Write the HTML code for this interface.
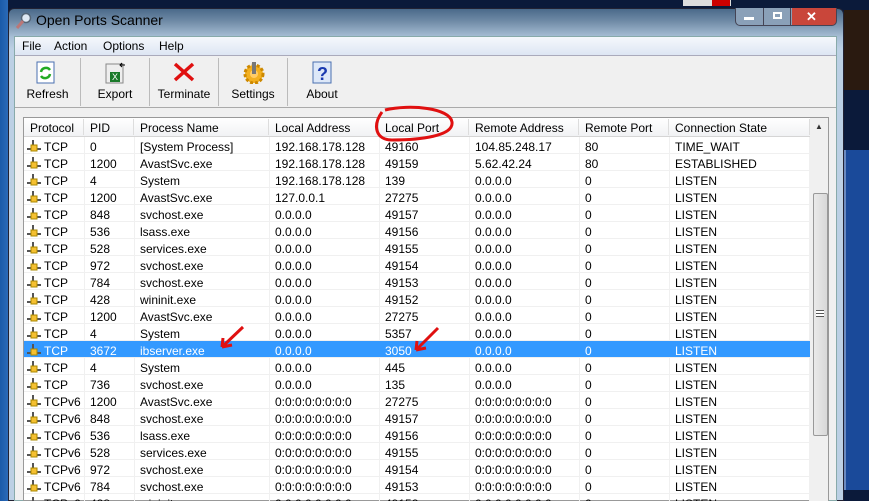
<!DOCTYPE html>
<html style="width:869px;height:501px;overflow:hidden"><head><meta charset="utf-8"><style>
*{margin:0;padding:0;box-sizing:border-box}
body{width:869px;height:501px;overflow:hidden;background:#0a2a6a;font-family:"Liberation Sans",sans-serif;font-size:12px;position:relative}
.abs{position:absolute}
#desk{left:0;top:0;width:869px;height:501px;background:linear-gradient(90deg,#1a5aa8 0,#2a6ab8 8px,#0b1a3a 8px)}
#frame{left:8px;top:8px;width:836px;height:493px;background:linear-gradient(180deg,#4a6a8a 0,#6f8aa6 12px,#a8bfd6 28px,#bcd0e4 40px);border:1px solid #223;border-radius:6px 6px 0 0}
#title{left:36px;top:12px;font-size:14px;color:#000}
#client{left:14px;top:36px;width:823px;height:465px;background:#f0f0f0;border:1px solid #8aa}
#menu{left:15px;top:37px;width:821px;height:18px;background:linear-gradient(#f5f8fc,#dde6f3)}
#menu span{position:absolute;top:2px;font-size:12px}
.tb{position:absolute;top:58px;height:48px;border-right:1px solid #bbb;text-align:center}
.tb .lbl{position:absolute;bottom:5px;left:0;right:0;font-size:12px}
#lv{left:23px;top:117px;width:806px;height:384px;background:#fff;border:1px solid #999}
#hdr{left:24px;top:118px;width:786px;height:19px;background:linear-gradient(#fff,#f1f2f4);border-bottom:1px solid #d5d5d5}
.h{position:absolute;top:3px;font-size:12px}
.hs{position:absolute;top:1px;width:1px;height:16px;background:#ddd}
#rows{position:absolute;left:0;top:0;width:869px;height:501px;overflow:hidden}
.row{position:absolute;left:24px;width:786px;height:17px;border-bottom:1px solid #f0f0f0}
.row span{position:absolute;top:3px;font-size:12px;white-space:nowrap}
.row.sel{background:#3399ff;color:#fff}
.vl{position:absolute;top:137px;width:1px;height:364px;background:#f0f0f0}
</style></head><body>
<div id="desk" class="abs"></div>
<div class="abs" style="left:683px;top:0;width:48px;height:6px;background:#ddd"></div>
<div class="abs" style="left:712px;top:0;width:18px;height:6px;background:#c00"></div>
<div class="abs" style="left:844px;top:10px;width:25px;height:80px;background:#2a1a10"></div>
<div class="abs" style="left:844px;top:150px;width:25px;height:340px;background:#1a4a9a;border-left:2px solid #6a8ac0"></div>
<div id="frame" class="abs"></div>
<svg class="abs" style="left:15px;top:12px" width="18" height="18"><circle cx="11" cy="6" r="4.5" fill="#dfe9f4" stroke="#567" stroke-width="1.5"/><line x1="8" y1="9" x2="2" y2="16" stroke="#b77" stroke-width="3"/></svg>
<div id="title" class="abs">Open Ports Scanner</div>
<div class="abs" style="left:735px;top:8px;width:102px;height:18px;border:1px solid #445;border-top:none;border-radius:0 0 5px 5px;background:linear-gradient(90deg,#8aa0b8 0,#8aa0b8 56%,#c9463a 56%)"></div>
<div class="abs" style="left:763px;top:8px;width:1px;height:17px;background:#445"></div>
<div class="abs" style="left:790px;top:8px;width:1px;height:17px;background:#445"></div>
<div class="abs" style="left:744px;top:17px;width:10px;height:3px;background:#fff"></div>
<div class="abs" style="left:773px;top:12px;width:9px;height:7px;border:2px solid #fff"></div>
<div class="abs" style="left:806px;top:9px;color:#fff;font-weight:bold;font-size:13px">✕</div>
<div id="client" class="abs"></div>
<div id="menu" class="abs"><span style="left:7px">File</span><span style="left:39px">Action</span><span style="left:88px">Options</span><span style="left:144px">Help</span></div>
<div class="abs" style="left:15px;top:55px;width:821px;height:1px;background:#aab"></div>
<div class="tb" style="left:15px;width:66px"><svg class="abs" style="left:21px;top:3px" width="20" height="24"><rect x="1" y="1" width="17" height="21" fill="#fff" stroke="#4a6fb0"/><path d="M5 11a5 5 0 0 1 9-2M14 13a5 5 0 0 1-9 2" stroke="#2a2" stroke-width="2.5" fill="none"/></svg><div class="lbl">Refresh</div></div>
<div class="tb" style="left:81px;width:69px"><svg class="abs" style="left:22px;top:3px" width="24" height="24"><rect x="3" y="3" width="17" height="19" fill="#eee" stroke="#888"/><rect x="7" y="11" width="10" height="10" fill="#1a7a2a"/><text x="9" y="19" font-size="9" fill="#fff" font-family="Liberation Sans">X</text><path d="M22 4h-5M19 2l-2 2 2 2" stroke="#000" fill="none"/></svg><div class="lbl">Export</div></div>
<div class="tb" style="left:150px;width:69px"><svg class="abs" style="left:23px;top:4px" width="22" height="20"><path d="M2 2L20 18M20 2L2 18" stroke="#e01010" stroke-width="3.5"/></svg><div class="lbl">Terminate</div></div>
<div class="tb" style="left:219px;width:69px"><svg class="abs" style="left:22px;top:4px" width="26" height="22"><circle cx="13" cy="12" r="9" fill="#f3b020" stroke="#c80" stroke-dasharray="3 2" stroke-width="3"/><circle cx="13" cy="12" r="4" fill="#fc6"/><rect x="11" y="0" width="4" height="12" fill="#777"/></svg><div class="lbl">Settings</div></div>
<div class="tb" style="left:288px;width:68px;border:none"><svg class="abs" style="left:23px;top:3px" width="22" height="24"><rect x="2" y="1" width="18" height="21" fill="#dde8f8" stroke="#4a6fb0"/><text x="6" y="19" font-size="18" font-weight="bold" fill="#1a3ab0" font-family="Liberation Sans">?</text></svg><div class="lbl">About</div></div>
<div class="abs" style="left:15px;top:107px;width:821px;height:1px;background:#aaa"></div>
<div id="lv" class="abs"></div>
<div id="hdr" class="abs">
<span class="h" style="left:6px">Protocol</span><span class="hs" style="left:59px"></span>
<span class="h" style="left:66px">PID</span><span class="hs" style="left:109px"></span>
<span class="h" style="left:116px">Process Name</span><span class="hs" style="left:244px"></span>
<span class="h" style="left:251px">Local Address</span><span class="hs" style="left:354px"></span>
<span class="h" style="left:361px">Local Port</span><span class="hs" style="left:444px"></span>
<span class="h" style="left:451px">Remote Address</span><span class="hs" style="left:554px"></span>
<span class="h" style="left:561px">Remote Port</span><span class="hs" style="left:644px"></span>
<span class="h" style="left:651px">Connection State</span><span class="hs" style="left:785px"></span>
</div>
<div class="vl" style="left:84px"></div><div class="vl" style="left:134px"></div><div class="vl" style="left:269px"></div><div class="vl" style="left:379px"></div><div class="vl" style="left:469px"></div><div class="vl" style="left:579px"></div><div class="vl" style="left:669px"></div><div class="vl" style="left:809px"></div>
<div id="rows"></div>
<div class="abs" style="left:810px;top:118px;width:18px;height:383px;background:#f0f0f0"></div>
<div class="abs" style="left:815px;top:122px;font-size:8px;color:#333">▲</div>
<div class="abs" style="left:813px;top:193px;width:15px;height:243px;border:1px solid #999;border-radius:2px;background:linear-gradient(90deg,#eaeaea,#d8d8d8)"></div>
<div class="abs" style="left:816px;top:310px;width:8px;height:7px;border-top:1px solid #555;border-bottom:1px solid #555;background:linear-gradient(#fff 0 2px,#555 2px 3px,#fff 3px)"></div>
<svg class="abs" style="left:0;top:0" width="869" height="501">
<path d="M385 110 C410 104 450 108 452 122 C454 136 420 140 392 140 C376 140 372 126 382 112" stroke="#e01010" stroke-width="3" fill="none"/>
<path d="M243 327 L222 347 M222 347 l10 -2 M222 347 l1 -9" stroke="#e01010" stroke-width="3" fill="none"/>
<path d="M438 328 L416 350 M416 350 l10 -2 M416 350 l1 -9" stroke="#e01010" stroke-width="3" fill="none"/>
</svg>
<script>
var d=[["TCP","0","[System Process]","192.168.178.128","49160","104.85.248.17","80","TIME_WAIT"],
["TCP","1200","AvastSvc.exe","192.168.178.128","49159","5.62.42.24","80","ESTABLISHED"],
["TCP","4","System","192.168.178.128","139","0.0.0.0","0","LISTEN"],
["TCP","1200","AvastSvc.exe","127.0.0.1","27275","0.0.0.0","0","LISTEN"],
["TCP","848","svchost.exe","0.0.0.0","49157","0.0.0.0","0","LISTEN"],
["TCP","536","lsass.exe","0.0.0.0","49156","0.0.0.0","0","LISTEN"],
["TCP","528","services.exe","0.0.0.0","49155","0.0.0.0","0","LISTEN"],
["TCP","972","svchost.exe","0.0.0.0","49154","0.0.0.0","0","LISTEN"],
["TCP","784","svchost.exe","0.0.0.0","49153","0.0.0.0","0","LISTEN"],
["TCP","428","wininit.exe","0.0.0.0","49152","0.0.0.0","0","LISTEN"],
["TCP","1200","AvastSvc.exe","0.0.0.0","27275","0.0.0.0","0","LISTEN"],
["TCP","4","System","0.0.0.0","5357","0.0.0.0","0","LISTEN"],
["TCP","3672","ibserver.exe","0.0.0.0","3050","0.0.0.0","0","LISTEN"],
["TCP","4","System","0.0.0.0","445","0.0.0.0","0","LISTEN"],
["TCP","736","svchost.exe","0.0.0.0","135","0.0.0.0","0","LISTEN"],
["TCPv6","1200","AvastSvc.exe","0:0:0:0:0:0:0:0","27275","0:0:0:0:0:0:0:0","0","LISTEN"],
["TCPv6","848","svchost.exe","0:0:0:0:0:0:0:0","49157","0:0:0:0:0:0:0:0","0","LISTEN"],
["TCPv6","536","lsass.exe","0:0:0:0:0:0:0:0","49156","0:0:0:0:0:0:0:0","0","LISTEN"],
["TCPv6","528","services.exe","0:0:0:0:0:0:0:0","49155","0:0:0:0:0:0:0:0","0","LISTEN"],
["TCPv6","972","svchost.exe","0:0:0:0:0:0:0:0","49154","0:0:0:0:0:0:0:0","0","LISTEN"],
["TCPv6","784","svchost.exe","0:0:0:0:0:0:0:0","49153","0:0:0:0:0:0:0:0","0","LISTEN"],
["TCPv6","428","wininit.exe","0:0:0:0:0:0:0:0","49152","0:0:0:0:0:0:0:0","0","LISTEN"]];
var xs=[20,66,116,251,361,451,561,651],h="";
d.forEach(function(r,i){h+='<div class="row'+(i==12?' sel':'')+'" style="top:'+(137+i*17)+'px">';
h+='<svg style="position:absolute;left:2px;top:2px" width="16" height="13"><path d="M7 1v7M1 10h14" stroke="#555" stroke-width="2"/><rect x="5" y="6" width="6" height="6" fill="#f5c030" stroke="#a80"/></svg>';
r.forEach(function(t,j){h+='<span style="left:'+xs[j]+'px">'+t+'</span>'});h+='</div>'});
document.getElementById('rows').innerHTML=h;
</script>
</body></html>
